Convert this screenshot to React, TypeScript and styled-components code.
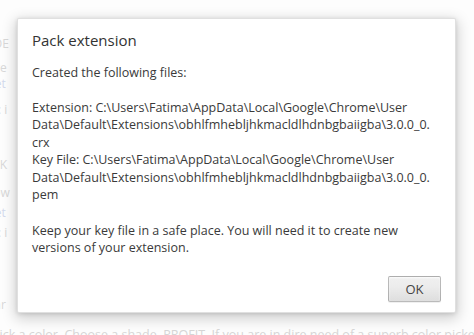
import React from "react";
import styled, { createGlobalStyle } from "styled-components";

const Global = createGlobalStyle`
  html, body { margin: 0; padding: 0; background: #ffffff; }
  body { width: 474px; height: 335px; overflow: hidden; font-family: "Open Sans", "Noto Sans", sans-serif; }
  #root { width: 474px; height: 335px; position: relative; overflow: hidden; }
`;

const Page = styled.div`
  position: relative;
  width: 474px;
  height: 335px;
  overflow: hidden;
  background: #fdfdfd;
`;

const Backdrop = styled.div`
  display: grid;
  grid-template-columns: 1fr 8px;
  height: 100%;
  color: #d6d6d6;
  font-size: 12px;
`;

const LeftCol = styled.div`
  display: flex;
  flex-direction: column;
  margin-left: -14px;
  padding-top: 36px;
`;

const Entry = styled.div<{ $top?: number; $link?: boolean }>`
  margin-top: ${(p) => p.$top ?? 0}px;
  line-height: 16px;
  white-space: nowrap;
  color: ${(p) => (p.$link ? "#d2d9ec" : "#d8d8d8")};
`;

const BottomLine = styled.div`
  margin-top: 14px;
  margin-left: 6px;
  white-space: nowrap;
  line-height: 16px;
  color: #d6d6d6;
  font-size: 12.5px;
`;

const RightCol = styled.div`
  display: flex;
  flex-direction: column;
  padding-top: 36px;
  color: #dadada;
`;

const Dialog = styled.div`
  position: absolute;
  left: 17px;
  top: 18px;
  width: 439px;
  height: 295px;
  box-sizing: border-box;
  background: #ffffff;
  border: 1px solid rgba(0, 0, 0, 0.12);
  border-radius: 2px;
  box-shadow: 0 4px 14px 2px rgba(0, 0, 0, 0.18), 0 1px 4px rgba(0, 0, 0, 0.12);
  padding: 11px 14px 10px 14px;
  display: flex;
  flex-direction: column;
  color: #3a3a3a;
`;

const Title = styled.div`
  font-size: 15px;
  line-height: 20px;
  color: #333;
  margin-bottom: 14px;
`;

const Para = styled.div<{ $gap?: number }>`
  font-size: 12.5px;
  line-height: 17.5px;
  margin-bottom: ${(p) => p.$gap ?? 0}px;
`;

const Line = styled.div`
  white-space: nowrap;
`;

const Footer = styled.div`
  margin-top: auto;
  display: flex;
  justify-content: flex-end;
`;

const Button = styled.button`
  width: 53px;
  height: 26px;
  font-family: inherit;
  font-size: 13px;
  color: #444;
  border: 1px solid rgba(0, 0, 0, 0.22);
  border-radius: 2px;
  background: linear-gradient(#f0f0f0, #ececec 40%, #dedede);
  box-shadow: 0 1px 0 rgba(0, 0, 0, 0.06), inset 0 1px 2px rgba(255, 255, 255, 0.8);
  padding: 0;
`;

export default function App() {
  return (
    <>
      <Global />
      <Page>
        <Backdrop>
          <LeftCol>
            <Entry>ADE</Entry>
            <Entry $top={8}>Icre</Entry>
            <Entry $link>Det</Entry>
            <Entry $top={10}>ID: i</Entry>
            <Entry $top={39}>I.PK</Entry>
            <Entry $top={12}>how</Entry>
            <Entry $top={4} $link>Det</Entry>
            <Entry $top={4}>ID: i</Entry>
            <Entry $top={56}>Chr</Entry>
            <BottomLine>Pick a color. Choose a shade. PROFIT. If you are in dire need of a superb color picker,</BottomLine>
          </LeftCol>
          <RightCol>
            <Entry>E</Entry>
            <Entry $top={242}>E</Entry>
          </RightCol>
        </Backdrop>
        <Dialog>
          <Title>Pack extension</Title>
          <Para $gap={17}>Created the following files:</Para>
          <Para $gap={18}>
            <Line>Extension: C:\Users\Fatima\AppData\Local\Google\Chrome\User</Line>
            <Line>Data\Default\Extensions\obhlfmhebljhkmacldlhdnbgbaiigba\3.0.0_0.</Line>
            <Line>crx</Line>
            <Line>Key File: C:\Users\Fatima\AppData\Local\Google\Chrome\User</Line>
            <Line>Data\Default\Extensions\obhlfmhebljhkmacldlhdnbgbaiigba\3.0.0_0.</Line>
            <Line>pem</Line>
          </Para>
          <Para>
            <Line>Keep your key file in a safe place. You will need it to create new</Line>
            <Line>versions of your extension.</Line>
          </Para>
          <Footer>
            <Button>OK</Button>
          </Footer>
        </Dialog>
      </Page>
    </>
  );
}
